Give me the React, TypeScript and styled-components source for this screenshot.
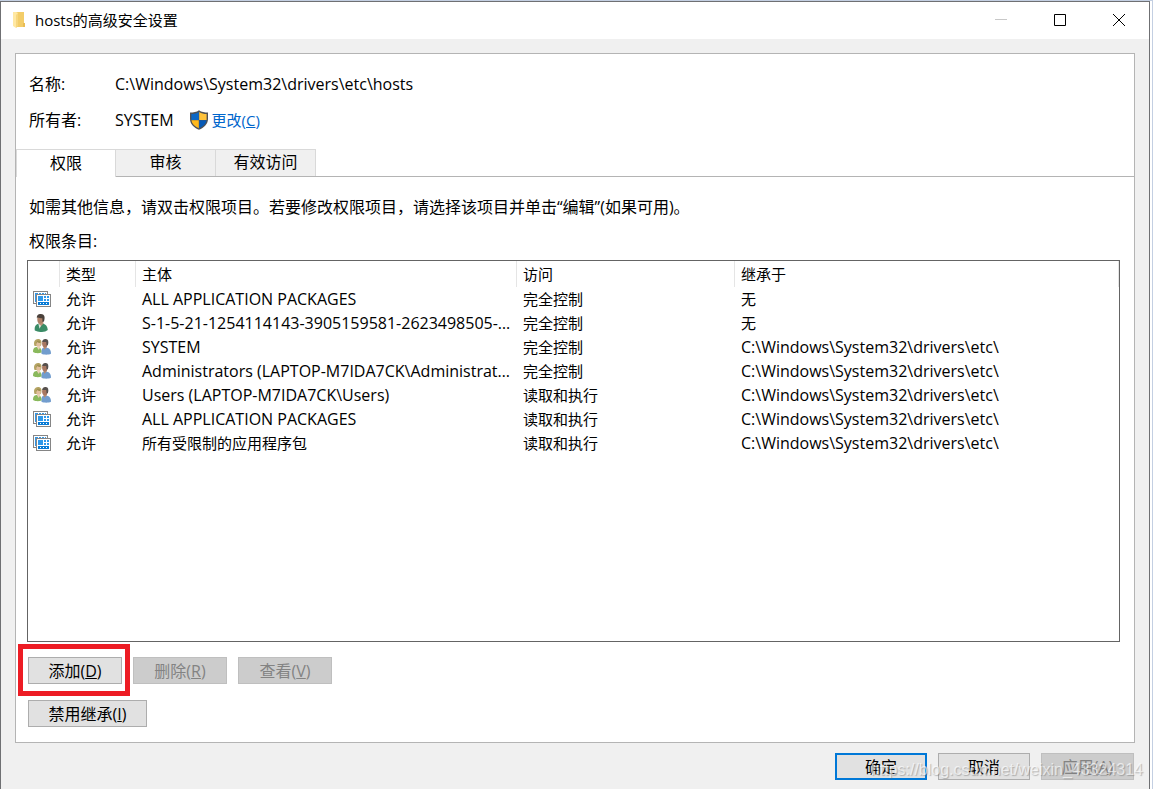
import React from "react";
import styled, { createGlobalStyle } from "styled-components";

const GlobalStyle = createGlobalStyle`
  *, *::before, *::after { box-sizing: border-box; }
  body {
    margin: 0;
    background: #fff;
    color: #000;
    font-family: "Open Sans", "Noto Sans CJK SC", sans-serif;
    font-size: 15px;
    line-height: 24px;
  }
  button { font: inherit; color: inherit; }
`;

const Desktop = styled.div`
  position: relative;
  display: flex;
  min-height: 100vh;
  padding-right: 2px;
  border-top: 1px solid #c3cfe2;
  border-right: 1px solid #c3cfe2;
`;

const Window = styled.main`
  flex: 1;
  min-width: 0;
  display: flex;
  flex-direction: column;
  background: #f0f0f0;
  border: 1px solid #6f7073;
  border-bottom: 0;
`;

const TitleBar = styled.header`
  display: flex;
  align-items: center;
  height: 37px;
  padding: 0 1px 2px 10px;
  background: #fff;
`;

const Title = styled.h1`
  flex: 1;
  margin: 0 0 0 8px;
  font-size: 15px;
  font-weight: 400;
`;

const CaptionButton = styled.button`
  display: grid;
  place-items: center;
  width: 59px;
  height: 35px;
  padding: 0;
  border: 0;
  background: transparent;
`;

const Panel = styled.section`
  flex: 1;
  display: flex;
  flex-direction: column;
  margin: 14px 14px 0;
  background: #fff;
  border: 1px solid #b4b4b4;
`;

const Summary = styled.dl`
  display: grid;
  grid-template-columns: 86px 1fr;
  row-gap: 12px;
  margin: 0;
  padding: 18px 13px 17px;
  font-size: 16px;

  dt, dd { margin: 0; display: flex; align-items: center; }
`;

const ChangeLink = styled.a`
  display: flex;
  align-items: center;
  gap: 3px;
  margin-left: 15px;
  color: #0066cc;
  font-size: 15px;
  text-decoration: none;
`;

const Tabs = styled.div`
  display: flex;
  height: 28px;
  border-bottom: 1px solid #b4b4b4;
`;

const Tab = styled.button<{ $active?: boolean }>`
  width: 100px;
  height: ${(p) => (p.$active ? 28 : 27)}px;
  padding: 0 0 2px;
  border: 1px solid #d9d9d9;
  border-width: 1px 1px 0 ${(p) => (p.$active ? "1px" : "0")};
  background: ${(p) => (p.$active ? "#fff" : "#f0f0f0")};
  font-size: 16px;
  line-height: 24px;
`;

const Content = styled.div`
  flex: 1;
  display: flex;
  flex-direction: column;
  padding: 18px 14px 15px 11px;
`;

const Note = styled.p`
  margin: 0 2px 10px;
  font-size: 16px;
`;

const ListFrame = styled.div`
  flex: 1;
  margin-top: -3px;
  border: 1px solid #646464;
`;

const Entries = styled.table`
  width: 100%;
  table-layout: fixed;
  border-collapse: separate;
  border-spacing: 0;

  th, td {
    height: 24px;
    padding: 0 2px 0 6px;
    text-align: left;
    font-weight: 400;
    white-space: nowrap;
    overflow: hidden;
    text-overflow: ellipsis;
  }
  th {
    height: 26px;
    border-right: 1px solid #e5e5e5;
  }
  td { border-right: 1px solid transparent; }
  td:first-child { padding-left: 5px; }
  svg { display: block; }
`;

const Cell = styled.td<{ $latin: boolean }>`
  font-size: ${(p) => (p.$latin ? 16 : 15)}px;
`;

const Actions = styled.div`
  display: flex;
  gap: 11px;
  margin: 15px 1px 0;

  & + & { margin-top: 16px; }
`;

const PushButton = styled.button<{ $width: number; $primary?: boolean }>`
  width: ${(p) => p.$width}px;
  height: 27px;
  padding: 0;
  border: ${(p) => (p.$primary ? "2px solid #0078d7" : "1px solid #adadad")};
  background: #e1e1e1;
  font-size: 16px;
  line-height: 22px;
  white-space: nowrap;

  &:disabled {
    border-color: #bfbfbf;
    background: #cccccc;
    color: #838383;
  }
`;

const Highlighted = styled.div`
  position: relative;
  display: flex;

  &::after {
    content: "";
    position: absolute;
    inset: -13px -8px -12px -10px;
    border: 5px solid #ed1c24;
    pointer-events: none;
  }
`;

const Footer = styled.footer`
  display: flex;
  justify-content: flex-end;
  gap: 11px;
  padding: 10px 15px 9px;
`;

const Watermark = styled.span`
  position: absolute;
  right: 9px;
  bottom: 7px;
  color: rgba(255, 255, 255, 0.65);
  font-family: "Liberation Sans", sans-serif;
  font-size: 16px;
  text-shadow: 1px 1px 1px rgba(110, 110, 110, 0.45);
  pointer-events: none;
`;

const FolderIcon = () => (
  <svg width="16" height="18" viewBox="0 0 16 18" aria-hidden="true">
    <path d="M5 1h8v11h1v4H5z" fill="#f3cd69" />
    <path d="M2 1h3l2 1v12l-2 3-3-2z" fill="#ffe8a3" />
    <path d="M5 4l2-2v13l-2 2z" fill="#f7d77f" />
    <path d="M12 12h2v4h-2z" fill="#e9bd55" />
  </svg>
);

const ShieldIcon = () => (
  <svg width="20" height="20" viewBox="0 0 20 20" aria-hidden="true">
    <path d="M10 0.2C7.500 2 4.500 2.600 1 2.600V9c0 5 4 8.800 9 10.800C15 17.800 19 14 19 9V2.600C15.500 2.600 12.500 2 10 .2z" fill="#505256" />
    <path d="M9.800 1.900C7.500 3.300 5.200 3.900 2.400 4V10h7.400z" fill="#0b67c5" />
    <path d="M10.200 1.900c2.300 1.400 4.600 2 7.400 2.100V10h-7.400z" fill="#ffc33c" />
    <path d="M2.400 10.200h7.400v8.100c-4-1.800-6.900-4.500-7.400-8.100z" fill="#ffb91d" />
    <path d="M17.600 10.200h-7.400v8.100c4-1.800 6.900-4.500 7.400-8.100z" fill="#0759b5" />
  </svg>
);

const PackageIcon = () => (
  <svg width="18" height="18" viewBox="0 0 18 18" shapeRendering="crispEdges" aria-hidden="true">
    <path d="M.5 1.500h14v12H.5z" fill="#fff" stroke="#858585" />
    <path d="M2 3h11v9H2z" fill="#3497e6" />
    <path d="M5 3h1v1H5zM8 3h1v1H8zM11 3h1v1h-1z" fill="#fff" />
    <path d="M3.500 4.500h14v12h-14z" fill="#fff" stroke="#858585" />
    <path d="M5 6h5v5H5zM11 6h2v2h-2zM14 6h2v2h-2zM11 9h2v2h-2zM14 9h2v2h-2z" fill="#2e98ea" />
    <path d="M5 12h11v3H5z" fill="#087bd6" />
    <path d="M7 13h1v1H7zM10 13h1v1h-1zM13 13h1v1h-1z" fill="#fff" />
  </svg>
);

const UserIcon = () => (
  <svg width="18" height="18" viewBox="0 0 18 18" aria-hidden="true">
    <path d="M1.800 16.500c-.6-3.500.4-6 4.200-7h4c3 1 4.600 3 4.800 6.500-3 2.500-9 2.700-13 .5z" fill="#3a8b66" />
    <path d="M5.500 9l1.800 4 3.200-3.500-.5-2.500H6z" fill="#bd9178" />
    <path d="M5.300 9.600l1.200 5.200 1.500-3z" fill="#dce8df" />
    <ellipse cx="7.200" cy="5.500" rx="2.900" ry="4" fill="#ae8067" />
    <path d="M4 4.500C3.300 1.300 5.500 0 8 .1 11.300.2 12.500 3 11 7.500L9.500 8 9.300 4.300C7.500 4.300 5.800 3.900 4.800 3.300z" fill="#4a413b" />
  </svg>
);

const GroupIcon = () => (
  <svg width="18" height="18" viewBox="0 0 18 18" aria-hidden="true">
    <path d="M8.500 15.800c-.5-4.300.5-6.300 3.500-6.300 4 0 6 2 6 6.300-2.500 1.200-7 1.200-9.500 0z" fill="#729dce" />
    <path d="M10.300 9l1.200 2.800L14 9V7h-3.500z" fill="#b58a70" />
    <ellipse cx="11.800" cy="5.500" rx="2.700" ry="3.700" fill="#a87862" />
    <path d="M9.200 4c.1-2.600 2-3.300 3.700-3 2.300.3 3.100 2.500 2 6.200L13.600 7.500 13.200 4z" fill="#56504d" />
    <path d="M0 14c0-4 1.500-5 4.500-5s4 2 4 5.500C6 15.500 2.500 15.500 0 14z" fill="#8ab95c" />
    <path d="M1.500 8C0 4 2 1 5 1s4.500 2.500 2.800 7z" fill="#b5a463" />
    <ellipse cx="5.500" cy="6" rx="2.200" ry="3.200" fill="#e2bf9e" />
    <path d="M3.800 9L5.800 12l1.500-3-.7-1h-2z" fill="#e8d0b5" />
    <path d="M3 6C3 3.500 4 2.500 5.300 2.400 7 2.400 7.800 3.600 7.600 5 5.600 5 4.800 4.600 4.400 4z" fill="#9f9050" />
  </svg>
);

const icons = { package: PackageIcon, user: UserIcon, group: GroupIcon };

type Entry = { icon: keyof typeof icons; principal: string; access: string; source: string };

const isLatin = (text: string) => /^[\x20-\x7e]+$/.test(text);

const etc = "C:\\Windows\\System32\\drivers\\etc\\";

const entries: Entry[] = [
  { icon: "package", principal: "ALL APPLICATION PACKAGES", access: "完全控制", source: "无" },
  { icon: "user", principal: "S-1-5-21-1254114143-3905159581-2623498505-1001", access: "完全控制", source: "无" },
  { icon: "group", principal: "SYSTEM", access: "完全控制", source: etc },
  { icon: "group", principal: "Administrators (LAPTOP-M7IDA7CK\\Administrators)", access: "完全控制", source: etc },
  { icon: "group", principal: "Users (LAPTOP-M7IDA7CK\\Users)", access: "读取和执行", source: etc },
  { icon: "package", principal: "ALL APPLICATION PACKAGES", access: "读取和执行", source: etc },
  { icon: "package", principal: "所有受限制的应用程序包", access: "读取和执行", source: etc },
];

export default function App() {
  return (
    <Desktop>
      <GlobalStyle />
      <Window>
        <TitleBar>
          <FolderIcon />
          <Title>hosts的高级安全设置</Title>
          <CaptionButton aria-label="最小化" disabled>
            <svg width="12" height="12"><path d="M0 5.500h12" stroke="#c8c8c8" /></svg>
          </CaptionButton>
          <CaptionButton aria-label="最大化">
            <svg width="12" height="12"><path d="M.5.5h11v11H.5z" fill="none" stroke="#000" /></svg>
          </CaptionButton>
          <CaptionButton aria-label="关闭">
            <svg width="12" height="12"><path d="M0 0l12 12M12 0L0 12" stroke="#000" /></svg>
          </CaptionButton>
        </TitleBar>

        <Panel>
          <Summary>
            <dt>名称:</dt>
            <dd>C:\Windows\System32\drivers\etc\hosts</dd>
            <dt>所有者:</dt>
            <dd>
              SYSTEM
              <ChangeLink href="#change">
                <ShieldIcon />
                <span>更改(<u>C</u>)</span>
              </ChangeLink>
            </dd>
          </Summary>

          <Tabs role="tablist">
            <Tab role="tab" aria-selected="true" $active>权限</Tab>
            <Tab role="tab" aria-selected="false">审核</Tab>
            <Tab role="tab" aria-selected="false">有效访问</Tab>
          </Tabs>

          <Content>
            <Note>如需其他信息，请双击权限项目。若要修改权限项目，请选择该项目并单击“编辑”(如果可用)。</Note>
            <Note id="entries-label">权限条目:</Note>
            <ListFrame>
              <Entries aria-labelledby="entries-label">
                <colgroup>
                  <col width="32" />
                  <col width="76" />
                  <col width="381" />
                  <col width="218" />
                  <col />
                </colgroup>
                <thead>
                  <tr>
                    <th />
                    <th>类型</th>
                    <th>主体</th>
                    <th>访问</th>
                    <th>继承于</th>
                  </tr>
                </thead>
                <tbody>
                  {entries.map((entry, i) => {
                    const Icon = icons[entry.icon];
                    return (
                      <tr key={i}>
                        <td><Icon /></td>
                        <td>允许</td>
                        <Cell $latin={isLatin(entry.principal)}>{entry.principal}</Cell>
                        <td>{entry.access}</td>
                        <Cell $latin={isLatin(entry.source)}>{entry.source}</Cell>
                      </tr>
                    );
                  })}
                </tbody>
              </Entries>
            </ListFrame>
            <Actions>
              <Highlighted>
                <PushButton $width={94}>添加(<u>D</u>)</PushButton>
              </Highlighted>
              <PushButton $width={94} disabled>删除(<u>R</u>)</PushButton>
              <PushButton $width={94} disabled>查看(<u>V</u>)</PushButton>
            </Actions>
            <Actions>
              <PushButton $width={119}>禁用继承(<u>I</u>)</PushButton>
            </Actions>
          </Content>
        </Panel>

        <Footer>
          <PushButton $width={92} $primary>确定</PushButton>
          <PushButton $width={92}>取消</PushButton>
          <PushButton $width={93} disabled>应用(<u>A</u>)</PushButton>
        </Footer>
      </Window>
      <Watermark>https://blog.csdn.net/weixin_43324314</Watermark>
    </Desktop>
  );
}
